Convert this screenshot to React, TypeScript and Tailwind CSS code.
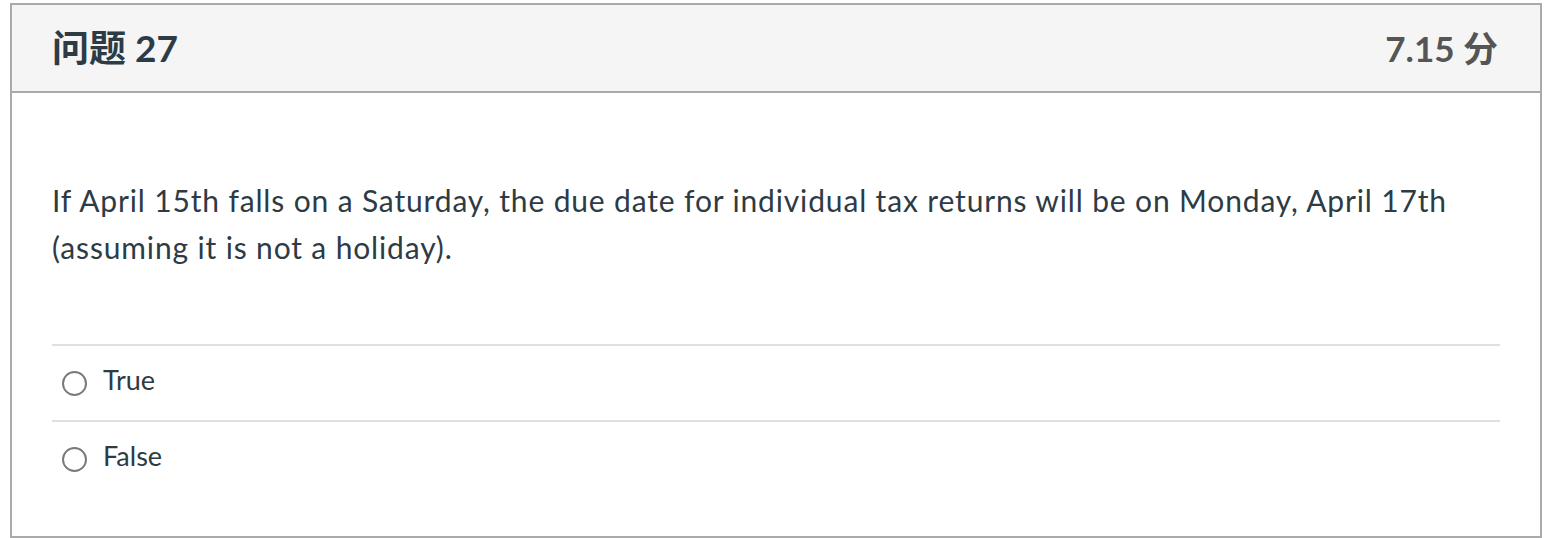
const answers = ["True", "False"];

export default function App() {
  return (
    <div className="pl-[10px] pt-[3px] font-['Lato','Noto_Sans_CJK_SC',sans-serif] text-[#2d3b45]">
      <div className="w-[1532px] border-2 border-[#aaaaaa] bg-white">
        <div className="flex h-[88px] items-center justify-between border-b-2 border-[#aaaaaa] bg-[#f5f5f5] px-10">
          <h2 className="text-[37px] font-bold">问题 27</h2>
          <div className="pr-[2px] text-[35px] font-bold text-[#555555]">7.15 分</div>
        </div>
        <div className="px-10 pt-[84px] pb-10">
          <p className="pr-2 text-[30px] leading-[47px] tracking-[0.85px]">
            If April 15th falls on a Saturday, the due date for individual tax returns will be on Monday, April 17th
            (assuming it is not a holiday).
          </p>
          <div className="mt-[73px]">
            {answers.map((answer) => (
              <label
                key={answer}
                className="flex h-[76px] items-center gap-[16px] border-t-2 border-[#e0e0e0] pl-[10px]"
              >
                <span className="h-[25px] w-[25px] rounded-full border-2 border-[#7a7a7a] bg-white" />
                <span className="pb-[5px] text-[27px]">{answer}</span>
              </label>
            ))}
          </div>
        </div>
      </div>
    </div>
  );
}
